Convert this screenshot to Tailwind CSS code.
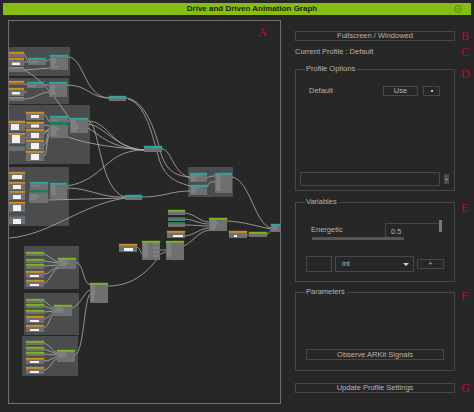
<!doctype html>
<html>
<head>
<meta charset="utf-8">
<script src="https://cdn.jsdelivr.net/npm/@tailwindcss/browser@4"></script>
</head>
<body class="bg-[#272727]">
<div class="w-[474px] h-[412px] overflow-hidden bg-[#272727] pt-[3px] font-['Liberation_Sans',sans-serif] text-[#b4b4b4] text-[7.5px] leading-[10px]">
  <header class="relative ml-[3px] w-[468px] h-[12px] bg-[#87bd13] flex items-center justify-center pl-[30px] font-bold text-[#15240a] text-[8px]">
    <span>Drive and Driven Animation Graph</span>
    <svg class="absolute right-[9px] top-[2px]" width="8" height="8" viewBox="0 0 8 8" fill="none" stroke="#4c6f10" stroke-width=".8"><circle cx="4" cy="4" r="3.4"/><path d="M2.5 3.5 4 5l1.5-1.5"/></svg>
  </header>
  <main class="flex mt-[5px] ml-[8px]">
    <section class="relative w-[273px] h-[384px] border border-[#6f6f6f] shrink-0">
      <svg class="absolute left-[-1px] top-[-1px] blur-[0.3px]" width="273" height="384" viewBox="8 20 273 384">
        <!-- groups -->
        <g fill="#4a4c4e">
          <rect x="9" y="47" width="61" height="29"/>
          <rect x="9" y="78" width="60" height="26"/>
          <rect x="9" y="105" width="81" height="59"/>
          <rect x="9" y="167" width="60" height="59"/>
          <rect x="188" y="167" width="45" height="30"/>
          <rect x="24" y="246" width="55" height="43"/>
          <rect x="24" y="293" width="55" height="42"/>
          <rect x="22" y="336" width="56" height="40"/>
        </g>
        <!-- wires -->
        <g fill="none" stroke="#b0b0aa" stroke-width=".8">
          <path d="M68 57C84 57 84 97 109 98M67 85C88 85 90 98 109 98"/>
          <path d="M126 98C145 100 155 130 160 150C165 170 175 176 190 177"/>
          <path d="M128 99C146 104 152 135 158 155C163 175 172 181 190 186"/>
          <path d="M162 149C172 150 172 172 190 178M142 197C165 197 170 191 190 191"/>
          <path d="M88 121C110 122 110 148 144 150M88 124C105 126 115 148 144 150M88 128C100 135 110 148 144 150M68 137C90 145 120 148 144 150"/>
          <path d="M90 122C100 130 100 190 125 197M67 186C105 180 105 150 144 150M67 188C90 188 100 198 125 197"/>
          <path d="M48 200L125 198M9 238C50 235 80 205 125 198"/>
          <path d="M24 70C45 80 60 105 72 122"/>
          <path d="M24 99C35 99 40 92 50 92M24 70L50 68M24 54C26 56 26 60 28 61M24 62H28M46 61C48 61 48 60 50 59M24 84C26 84 26 85 27 85M24 92H27M44 85H49"/>
          <path d="M44 115C47 115 47 120 50 122M44 125C47 125 47 126 50 126M25 126H26M44 134C47 134 47 128 50 128M25 138C35 138 40 132 50 130M44 145C47 145 47 130 50 132M44 156C47 156 47 134 50 134M68 121H70"/>
          <path d="M232 177C250 180 255 225 271 228M227 221C245 222 255 226 271 229M207 178C210 176 212 176 215 176M207 187C210 180 212 182 215 182M247 235H249M267 235L271 230"/>
          <path d="M185 213C195 214 200 222 209 222M185 219C195 220 200 224 209 224M185 225C195 225 200 226 209 226M185 236C195 235 200 228 209 228M184 246C195 240 198 232 209 230"/>
          <path d="M137 247C140 248 140 252 142 254M160 250H166M160 254C163 254 163 252 166 252"/>
          <path d="M108 286C130 286 145 275 158 258"/>
          <path d="M76 262C84 264 82 282 90 285M72 308C80 306 84 292 90 290M75 355C84 352 84 300 90 294"/>
          <path d="M44 254C50 256 52 260 58 262M44 261L58 263M44 266L58 265M44 274C50 274 52 268 58 267M44 283C50 282 52 270 58 268"/>
          <path d="M44 301C48 303 50 307 54 308M44 306L54 310M44 312L54 311M44 319C48 319 50 314 54 312M44 328C48 328 50 316 54 314"/>
          <path d="M44 343C50 345 52 351 57 353M44 349L57 354M44 354L57 355M44 361C50 361 52 358 57 357M44 370C50 370 52 360 57 359"/>
        </g>
        <!-- gray bodies -->
        <g fill="#707070">
          <rect x="9" y="52" width="15" height="5"/><rect x="9" y="58" width="15" height="8"/><rect x="9" y="67" width="15" height="5"/><rect x="28" y="58" width="18" height="7"/><rect x="50" y="55" width="18" height="15"/>
          <rect x="9" y="81" width="15" height="4"/><rect x="9" y="88" width="15" height="8"/><rect x="9" y="97" width="15" height="4"/><rect x="27" y="82" width="17" height="6"/><rect x="49" y="82" width="18" height="15"/>
          <rect x="26" y="112" width="18" height="8"/><rect x="9" y="121" width="16" height="10"/><rect x="26" y="122" width="18" height="6"/><rect x="9" y="133" width="16" height="11"/><rect x="26" y="129" width="18" height="10"/><rect x="26" y="140" width="18" height="10"/><rect x="9" y="145" width="16" height="6"/><rect x="26" y="151" width="18" height="10"/><rect x="50" y="116" width="18" height="22"/><rect x="70" y="118" width="18" height="15"/>
          <rect x="9" y="172" width="16" height="8"/><rect x="9" y="182" width="16" height="8"/><rect x="9" y="191" width="16" height="9"/><rect x="9" y="202" width="16" height="10"/><rect x="9" y="215" width="16" height="9"/><rect x="30" y="182" width="18" height="8"/><rect x="29" y="190" width="19" height="13"/><rect x="50" y="183" width="17" height="16"/>
          <rect x="109" y="96" width="17" height="5"/><rect x="144" y="146" width="18" height="6"/><rect x="125" y="195" width="17" height="5"/>
          <rect x="190" y="173" width="17" height="9"/><rect x="190" y="185" width="17" height="10"/><rect x="215" y="173" width="17" height="20"/>
          <rect x="168" y="210" width="17" height="5"/><rect x="168" y="217" width="17" height="4"/><rect x="168" y="222" width="17" height="5"/><rect x="167" y="231" width="18" height="7"/><rect x="209" y="218" width="18" height="13"/><rect x="229" y="231" width="18" height="7"/><rect x="249" y="232" width="18" height="5"/><rect x="271" y="224" width="9" height="8"/>
          <rect x="119" y="244" width="18" height="8"/><rect x="142" y="241" width="18" height="19"/><rect x="166" y="241" width="18" height="19"/>
          <rect x="26" y="252" width="18" height="4"/><rect x="26" y="259" width="18" height="4"/><rect x="26" y="264" width="18" height="5"/><rect x="26" y="271" width="18" height="7"/><rect x="26" y="280" width="18" height="7"/><rect x="58" y="258" width="18" height="11"/>
          <rect x="26" y="299" width="18" height="4"/><rect x="26" y="304" width="18" height="4"/><rect x="26" y="310" width="18" height="4"/><rect x="26" y="316" width="18" height="7"/><rect x="26" y="325" width="18" height="7"/><rect x="54" y="305" width="18" height="11"/>
          <rect x="26" y="341" width="18" height="4"/><rect x="26" y="347" width="18" height="4"/><rect x="26" y="352" width="18" height="4"/><rect x="26" y="358" width="18" height="6"/><rect x="26" y="367" width="18" height="7"/><rect x="57" y="350" width="18" height="12"/>
          <rect x="90" y="283" width="18" height="20"/>
        </g>
        <!-- orange headers -->
        <g fill="#cf8f1f" stroke="#cf8f1f" stroke-width=".4">
          <rect x="9" y="52" width="15" height="1.5"/><rect x="9" y="58" width="15" height="1.5"/>
          <rect x="9" y="81" width="15" height="1.5"/><rect x="9" y="88" width="15" height="1.5"/>
          <rect x="26" y="112" width="18" height="1.5"/><rect x="9" y="121" width="16" height="1.5"/><rect x="26" y="122" width="18" height="1.5"/><rect x="9" y="133" width="16" height="1.5"/><rect x="26" y="129" width="18" height="1.5"/><rect x="26" y="140" width="18" height="1.5"/><rect x="26" y="151" width="18" height="1.5"/>
          <rect x="9" y="172" width="16" height="1.5"/><rect x="9" y="182" width="16" height="1.5"/><rect x="9" y="191" width="16" height="1.5"/><rect x="9" y="202" width="16" height="1.5"/>
          <rect x="167" y="231" width="18" height="1.5"/><rect x="229" y="231" width="18" height="1.5"/><rect x="119" y="244" width="18" height="1.5"/>
          <rect x="26" y="271" width="18" height="1.5"/><rect x="26" y="280" width="18" height="1.5"/><rect x="26" y="316" width="18" height="1.5"/><rect x="26" y="325" width="18" height="1.5"/><rect x="26" y="358" width="18" height="1.5"/><rect x="26" y="367" width="18" height="1.5"/>
        </g>
        <!-- teal headers -->
        <g fill="#2ea5a2" stroke="#2ea5a2" stroke-width=".4">
          <rect x="28" y="58" width="18" height="1.5"/><rect x="50" y="55" width="18" height="1.5"/><rect x="27" y="82" width="17" height="1.5"/><rect x="49" y="82" width="18" height="1.5"/>
          <rect x="50" y="116" width="18" height="1.5"/><rect x="70" y="118" width="18" height="1.5"/><rect x="30" y="182" width="18" height="1.5"/><rect x="50" y="183" width="17" height="1.5"/>
          <rect x="109" y="96" width="17" height="2"/><rect x="144" y="146" width="18" height="2"/><rect x="125" y="195" width="17" height="2"/>
          <rect x="190" y="173" width="17" height="1.5"/><rect x="190" y="185" width="17" height="1.5"/><rect x="215" y="173" width="17" height="1.5"/><rect x="271" y="224" width="9" height="2"/>
        </g>
        <!-- green headers -->
        <g fill="#7cb81c" stroke="#7cb81c" stroke-width=".4">
          <rect x="168" y="210" width="17" height="1.5"/><rect x="209" y="218" width="18" height="1.5"/><rect x="249" y="232" width="18" height="1.5"/><rect x="142" y="241" width="18" height="1.5"/><rect x="166" y="241" width="18" height="1.5"/>
          <rect x="26" y="252" width="18" height="1.5"/><rect x="26" y="259" width="18" height="1.5"/><rect x="26" y="264" width="18" height="1.5"/><rect x="58" y="258" width="18" height="1.5"/>
          <rect x="26" y="299" width="18" height="1.5"/><rect x="26" y="304" width="18" height="1.5"/><rect x="26" y="310" width="18" height="1.5"/><rect x="54" y="305" width="18" height="1.5"/>
          <rect x="26" y="341" width="18" height="1.5"/><rect x="26" y="347" width="18" height="1.5"/><rect x="26" y="352" width="18" height="1.5"/><rect x="57" y="350" width="18" height="1.5"/>
          <rect x="90" y="283" width="18" height="1.5"/>
        </g>
        <!-- dark green and slate headers -->
        <g fill="#1f7a5c">
          <rect x="50" y="122" width="18" height="3"/><rect x="29" y="190" width="19" height="2.5"/><rect x="168" y="217" width="17" height="1.5"/><rect x="168" y="222" width="17" height="1.5"/>
        </g>
        <g fill="#2c5f78"><rect x="9" y="145" width="16" height="1.5"/><rect x="9" y="215" width="16" height="1.5"/></g>
        <g fill="#8d86a8"><rect x="9" y="67" width="15" height="1.5"/><rect x="9" y="97" width="15" height="1.5"/></g>
        <!-- white fields -->
        <g fill="#f2f2f2">
          <rect x="12" y="62.500" width="8" height="2.500"/><rect x="12" y="92" width="8" height="2.500"/>
          <rect x="31" y="115" width="8" height="3"/><rect x="11" y="124" width="8" height="6"/><rect x="31" y="124.500" width="8" height="3"/><rect x="12" y="135" width="8" height="8"/><rect x="31" y="133" width="8" height="5"/><rect x="31" y="143" width="8" height="6"/><rect x="31" y="154" width="8" height="6"/>
          <rect x="12" y="175" width="10" height="4"/><rect x="13" y="185" width="8" height="4"/><rect x="13" y="195" width="8" height="4"/><rect x="13" y="205" width="8" height="6"/><rect x="13" y="219" width="8" height="5"/>
          <rect x="173" y="235" width="10" height="2"/><rect x="234" y="235" width="3" height="2"/><rect x="124" y="248" width="9" height="3"/>
          <rect x="30" y="275" width="9" height="2"/><rect x="30" y="284" width="9" height="2"/><rect x="30" y="320" width="9" height="2"/><rect x="30" y="329" width="9" height="2"/><rect x="30" y="361" width="9" height="2"/><rect x="30" y="371" width="9" height="2"/>
        </g>
        <!-- row hints -->
        <g fill="none" stroke="#c4c4c4" stroke-width=".5" opacity=".7">
          <path d="M51 59h6M51 61h5M51 63h5M51 65h4M51 67h7M29 62h9M28 86h8M50 86h5M50 88h5M50 90h4M50 92h5M50 94h6"/>
          <path d="M51 120h7M51 127h6M51 129h8M51 131h6M51 133h5M51 135h6M71 121h5M71 123h5M71 125h6M71 127h8M71 129h7M71 131h5"/>
          <path d="M31 186h8M30 195h8M30 197h10M30 199h7M51 186h5M51 188h5M51 190h4M51 192h5M51 194h5"/>
          <path d="M191 176h8M191 178h5M191 180h5M191 188h8M191 190h5M191 192h5M216 176h5M216 178h5M216 180h4M216 182h5M216 184h4M216 186h5M216 188h4M216 190h5"/>
          <path d="M210 221h6M210 223h8M210 225h7M210 227h6M210 229h5M143 244h5M143 246h6M143 248h5M143 250h6M143 252h5M143 254h5M143 256h5M153 244h6M153 248h6M153 252h6M153 256h6M167 244h4M167 246h4M167 248h5M167 250h4M167 252h5M167 254h4M167 256h4"/>
          <path d="M59 261h8M59 263h9M59 265h7M55 308h8M55 310h9M55 312h7M58 353h8M58 355h9M58 357h7M91 286h4M91 288h4M91 290h4M91 292h4M91 294h4M91 296h3M91 298h4M91 300h4"/>
          <path d="M272 227h5M272 229h6"/>
        </g>
      </svg>
      <span class="absolute left-[249px] top-[5px] font-['Liberation_Serif',serif] text-[12px] leading-[12px] text-[#b81020]">A</span>
    </section>

    <aside class="ml-[14px] w-[178px] shrink-0">
      <div class="flex items-center mt-[11px] h-[10px]">
        <button class="w-[160px] h-[10px] border border-[#484848] flex items-center justify-center">Fullscreen / Windowed</button>
        <span class="ml-[6px] font-['Liberation_Serif',serif] text-[12px] leading-[12px] text-[#b81020]">B</span>
      </div>
      <div class="flex items-center mt-[5px] h-[12px]">
        <p class="w-[160px]">Current Profile : Default</p>
        <span class="ml-[6px] font-['Liberation_Serif',serif] text-[12px] leading-[12px] text-[#b81020]">C</span>
      </div>
      <div class="flex items-start mt-[6px]">
        <fieldset class="w-[160px] h-[127px] border border-[#484848]">
          <legend class="ml-[9px] px-[1px] w-[52px] h-[10px]">Profile Options</legend>
          <div class="flex items-center mt-[12px] pl-[13px]">
            <span class="w-[74px]">Default</span>
            <button class="w-[35px] h-[10px] border border-[#484848] flex items-center justify-center">Use</button>
            <button class="ml-[5px] w-[17px] h-[10px] border border-[#484848] flex items-center justify-center"><span class="block w-[2px] h-[2px] bg-[#c4c4c4]"></span></button>
          </div>
          <div class="flex items-center mt-[76px] ml-[4px]">
            <div class="w-[140px] h-[14px] border border-[#484848]"></div>
            <button class="ml-[4px] w-[5px] h-[10px] bg-[#4a4a4a] flex items-center justify-center text-[6px]">+</button>
          </div>
        </fieldset>
        <span class="ml-[6px] mt-[4px] font-['Liberation_Serif',serif] text-[12px] leading-[12px] text-[#b81020]">D</span>
      </div>
      <div class="flex items-start mt-[6px]">
        <fieldset class="w-[160px] h-[85px] border border-[#484848]">
          <legend class="ml-[9px] px-[1px] w-[35px] h-[10px]">Variables</legend>
          <div class="flex items-center mt-[16px] ml-[15px]">
            <span class="w-[74px]">Energetic</span>
            <div class="relative w-[55px] h-[14px] border-t border-l border-[#484848] pl-[5px] pt-[3px]">
              0.5
              <span class="absolute right-[-2px] top-[-4px] w-[3px] h-[12px] bg-[#777777]"></span>
            </div>
          </div>
          <div class="ml-[16px] w-[92px] h-[3px] bg-[#565656]"></div>
          <div class="flex items-center mt-[16px] ml-[10px]">
            <div class="w-[26px] h-[16px] border border-[#484848]"></div>
            <div class="ml-[3px] w-[79px] h-[16px] border border-[#484848] flex items-center justify-between pl-[6px] pr-[4px]">
              <span>int</span>
              <span class="w-0 h-0 border-x-[3px] border-x-transparent border-t-[3px] border-t-[#cfcfcf]"></span>
            </div>
            <button class="ml-[3px] w-[27px] h-[10px] border border-[#484848] flex items-center justify-center">+</button>
          </div>
        </fieldset>
        <span class="ml-[6px] mt-[5px] font-['Liberation_Serif',serif] text-[12px] leading-[12px] text-[#b81020]">E</span>
      </div>
      <div class="flex items-start mt-[5px]">
        <fieldset class="w-[160px] h-[84px] border border-[#484848]">
          <legend class="ml-[9px] px-[1px] w-[42px] h-[10px]">Parameters</legend>
          <button class="block mt-[52px] ml-[10px] w-[138px] h-[11px] border border-[#484848]">Observe ARKit Signals</button>
        </fieldset>
        <span class="ml-[6px] mt-[3px] font-['Liberation_Serif',serif] text-[12px] leading-[12px] text-[#b81020]">F</span>
      </div>
      <div class="flex items-center mt-[12px] h-[10px]">
        <button class="w-[160px] h-[10px] border border-[#484848] flex items-center justify-center">Update Profile Settings</button>
        <span class="ml-[6px] font-['Liberation_Serif',serif] text-[12px] leading-[12px] text-[#b81020]">G</span>
      </div>
    </aside>
  </main>
</div>
</body>
</html>
